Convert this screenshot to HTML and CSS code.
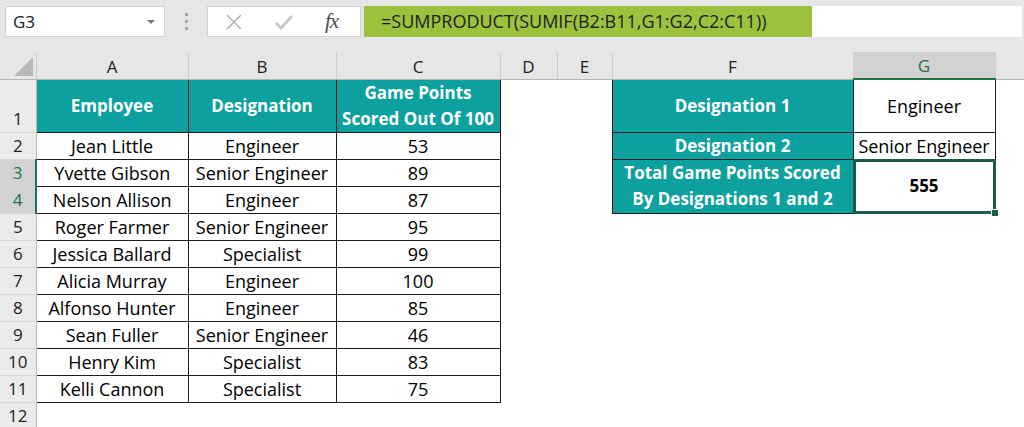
FILE: index.html
```html
<!DOCTYPE html>
<html lang="en">
  <head>
    <meta charset="UTF-8" />
    <meta name="viewport" content="width=device-width, initial-scale=1.0" />
    <title>SUMPRODUCT with SUMIF</title>
    <link rel="stylesheet" href="styles.css">
  </head>
  <body>
    <div class="toolbar">
      <div class="name-box">G3<span class="arrow"></span></div>
      <div class="dots"><i></i><i></i><i></i></div>
      <div class="fx-box">
        <svg class="icon" width="20" height="16" viewBox="0 0 20 16">
          <path d="M3 1 L17 15 M17 1 L3 15" stroke="#b3b3b3" stroke-width="1.6" fill="none" />
        </svg>
        <svg class="icon" width="20" height="16" viewBox="0 0 20 16">
          <path d="M2 9 L7 14 L18 2" stroke="#c4c4c4" stroke-width="2.6" fill="none" />
        </svg>
        <span class="fx">fx</span>
      </div>
      <div class="formula">=SUMPRODUCT(SUMIF(B2:B11,G1:G2,C2:C11))</div>
      <div class="formula-rest"></div>
    </div>

    <table class="sheet">
      <colgroup>
        <col class="c-row" />
        <col class="c-a" />
        <col class="c-b" />
        <col class="c-c" />
        <col class="c-d" />
        <col class="c-e" />
        <col class="c-f" />
        <col class="c-g" />
        <col />
      </colgroup>
      <tr class="col-heads">
        <th class="corner">
          <svg width="22" height="20" viewBox="0 0 22 20"><polygon points="21,0 21,19 2,19" fill="#b8b8b8" /></svg>
        </th>
        <th>A</th>
        <th>B</th>
        <th>C</th>
        <th>D</th>
        <th>E</th>
        <th>F</th>
        <th class="picked">G</th>
        <th class="last"></th>
      </tr>
      <tr class="tall">
        <th class="row-head">1</th>
        <td class="b head">Employee</td>
        <td class="b head">Designation</td>
        <td class="b head">Game Points<br />Scored Out Of 100</td>
        <td></td>
        <td></td>
        <td class="b head">Designation 1</td>
        <td class="b">Engineer</td>
        <td></td>
      </tr>
      <tr>
        <th class="row-head">2</th>
        <td class="b">Jean Little</td>
        <td class="b">Engineer</td>
        <td class="b">53</td>
        <td></td>
        <td></td>
        <td class="b head">Designation 2</td>
        <td class="b tight">Senior Engineer</td>
        <td></td>
      </tr>
      <tr>
        <th class="row-head picked">3</th>
        <td class="b">Yvette Gibson</td>
        <td class="b">Senior Engineer</td>
        <td class="b">89</td>
        <td></td>
        <td></td>
        <td class="b head" rowspan="2">Total Game Points Scored<br />By Designations 1 and 2</td>
        <td class="b total" rowspan="2">555</td>
        <td></td>
      </tr>
      <tr>
        <th class="row-head picked">4</th>
        <td class="b">Nelson Allison</td>
        <td class="b">Engineer</td>
        <td class="b">87</td>
        <td></td>
        <td></td>
        <td></td>
      </tr>
      <tr>
        <th class="row-head">5</th>
        <td class="b">Roger Farmer</td>
        <td class="b">Senior Engineer</td>
        <td class="b">95</td>
        <td></td><td></td><td></td><td></td><td></td>
      </tr>
      <tr>
        <th class="row-head">6</th>
        <td class="b">Jessica Ballard</td>
        <td class="b">Specialist</td>
        <td class="b">99</td>
        <td></td><td></td><td></td><td></td><td></td>
      </tr>
      <tr>
        <th class="row-head">7</th>
        <td class="b">Alicia Murray</td>
        <td class="b">Engineer</td>
        <td class="b">100</td>
        <td></td><td></td><td></td><td></td><td></td>
      </tr>
      <tr>
        <th class="row-head">8</th>
        <td class="b">Alfonso Hunter</td>
        <td class="b">Engineer</td>
        <td class="b">85</td>
        <td></td><td></td><td></td><td></td><td></td>
      </tr>
      <tr>
        <th class="row-head">9</th>
        <td class="b">Sean Fuller</td>
        <td class="b">Senior Engineer</td>
        <td class="b">46</td>
        <td></td><td></td><td></td><td></td><td></td>
      </tr>
      <tr>
        <th class="row-head">10</th>
        <td class="b">Henry Kim</td>
        <td class="b">Specialist</td>
        <td class="b">83</td>
        <td></td><td></td><td></td><td></td><td></td>
      </tr>
      <tr>
        <th class="row-head">11</th>
        <td class="b">Kelli Cannon</td>
        <td class="b">Specialist</td>
        <td class="b">75</td>
        <td></td><td></td><td></td><td></td><td></td>
      </tr>
      <tr>
        <th class="row-head">12</th>
        <td></td><td></td><td></td><td></td><td></td><td></td><td></td><td></td>
      </tr>
    </table>
  </body>
</html>
```

FILE: styles.css
```css
* {
  margin: 0;
  padding: 0;
  box-sizing: border-box;
}
body {
  width: 1024px;
  height: 427px;
  overflow: hidden;
  background-color: #fff;
  font-family: "Open Sans", "Noto Sans", sans-serif;
  color: #000;
}

/* formula bar */
.toolbar {
  height: 52px;
  background-color: #e6e6e6;
  display: flex;
  align-items: flex-start;
  padding: 6px 2px 0 5px;
}
.name-box {
  width: 160px;
  height: 31px;
  background-color: #fff;
  border: 1px solid #d2d2d2;
  display: flex;
  align-items: center;
  padding-left: 7px;
  font-size: 17px;
  color: #222;
  position: relative;
}
.name-box .arrow {
  position: absolute;
  right: 9px;
  top: 13px;
  border-left: 4px solid transparent;
  border-right: 4px solid transparent;
  border-top: 4px solid #777;
}
.dots {
  width: 42px;
  height: 31px;
  display: flex;
  flex-direction: column;
  align-items: center;
  justify-content: center;
  gap: 4px;
}
.dots i {
  width: 3px;
  height: 3px;
  background-color: #a8a8a8;
}
.fx-box {
  width: 154px;
  height: 31px;
  background-color: #fff;
  border: 1px solid #d2d2d2;
  display: flex;
  align-items: center;
  padding-left: 16px;
  gap: 30px;
}
.fx-box .fx {
  font-family: "Liberation Serif", "DejaVu Serif", serif;
  font-style: italic;
  font-size: 21px;
  color: #4a4a4a;
  margin-left: 1px;
  letter-spacing: -1px;
}
.formula {
  width: 448px;
  height: 31px;
  margin-left: 3px;
  background-color: #9bc13d;
  font-size: 18px;
  line-height: 30px;
  padding-left: 17px;
  color: #1e1e1e;
  white-space: nowrap;
}
.formula-rest {
  flex: 1;
  height: 31px;
  background-color: #fff;
}

/* grid */
.sheet {
  border-collapse: collapse;
  table-layout: fixed;
  width: 1024px;
}
.c-row { width: 36px; }
.c-a { width: 152px; }
.c-b { width: 148px; }
.c-c { width: 164px; }
.c-d { width: 57px; }
.c-e { width: 55px; }
.c-f { width: 241px; }
.c-g { width: 142px; }

.sheet tr {
  height: 27px;
}
.sheet tr.tall {
  height: 52px;
}
.sheet td {
  font-size: 18px;
  line-height: 26px;
  text-align: center;
  vertical-align: middle;
  white-space: nowrap;
  overflow: visible;
}

.col-heads th {
  background-color: #e6e6e6;
  font-weight: normal;
  font-size: 17px;
  color: #222;
  border-right: 1px solid #cdcdcd;
  border-bottom: 1px solid #b5b5b5;
  vertical-align: bottom;
  line-height: 25px;
}
.col-heads th.last {
  border-right: none;
}
.col-heads th.picked {
  background-color: #d2d2d2;
  color: #217346;
  border-bottom: 2px solid #217346;
}
.col-heads th.corner {
  text-align: right;
  padding-right: 2px;
  line-height: 0;
  vertical-align: bottom;
  padding-bottom: 2px;
}

.row-head {
  background-color: #ebebeb;
  font-weight: normal;
  font-size: 17px;
  color: #222;
  border-right: 1px solid #b5b5b5;
  border-bottom: 1px solid #d6d6d6;
  vertical-align: bottom;
  line-height: 26px;
  text-align: center;
}
.row-head.picked {
  background-color: #d2d2d2;
  color: #217346;
  border-right: 2px solid #217346;
}

.sheet td.b {
  border: 1px solid #1e1e1e;
}
.sheet td.head {
  background-color: #0ca19f;
  color: #fff;
  font-weight: bold;
  font-size: 17px;
}
.sheet td.tight {
  letter-spacing: -0.1px;
}
.sheet td.total {
  font-weight: bold;
  font-size: 17px;
  position: relative;
}
.sheet td.total::after {
  content: "";
  position: absolute;
  top: -1px;
  left: -1px;
  right: -1px;
  bottom: -1px;
  border: 3px solid #1d5a4e;
}
.sheet td.total::before {
  content: "";
  position: absolute;
  right: -4px;
  bottom: -4px;
  width: 6px;
  height: 6px;
  background-color: #1d5a4e;
  border: 1px solid #fff;
  z-index: 1;
}
```
